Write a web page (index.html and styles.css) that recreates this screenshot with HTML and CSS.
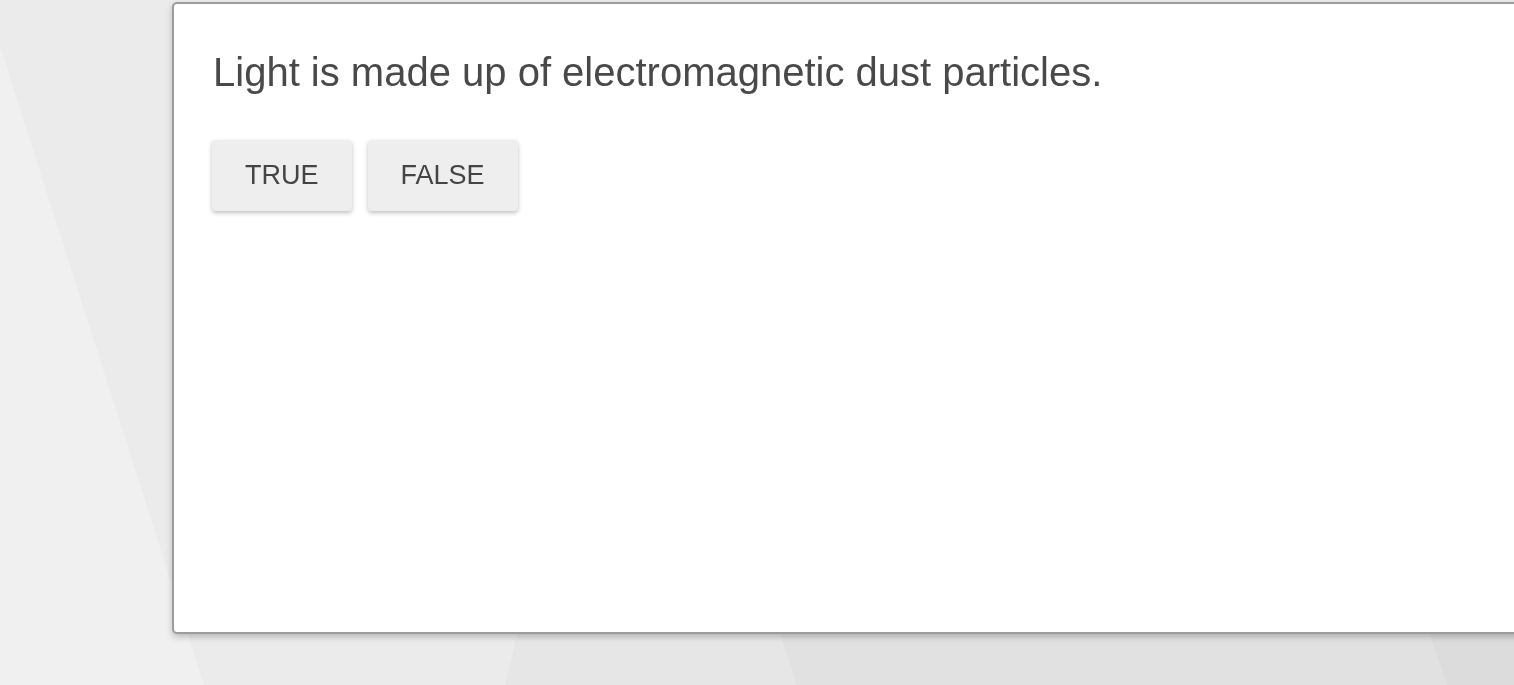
FILE: index.html
```html
<!DOCTYPE html>
<html lang="en">
<head>
<meta charset="utf-8">
<title>Quiz</title>
<link rel="stylesheet" href="styles.css">
</head>
<body>
<svg class="backdrop" viewBox="0 0 1514 685" preserveAspectRatio="none" aria-hidden="true">
  <rect x="0" y="0" width="1514" height="685" fill="#ebebeb"/>
  <polygon points="0,46 204,685 0,685" fill="#f0f0f0"/>
  <polygon points="523,610 771,610 797,685 505,685" fill="#e6e6e6"/>
  <polygon points="771,610 1421,610 1447,685 797,685" fill="#e1e1e1"/>
  <polygon points="1421,610 1514,610 1514,685 1447,685" fill="#dcdcdc"/>
</svg>
<main class="card">
  <p class="question">Light is made up of electromagnetic dust particles.</p>
  <div class="answers">
    <button class="answer" type="button">TRUE</button>
    <button class="answer" type="button">FALSE</button>
  </div>
</main>
</body>
</html>
```
FILE: styles.css
```css
html, body {
  margin: 0;
  padding: 0;
  height: 100%;
  overflow: hidden;
}

body {
  font-family: "Liberation Sans", Arial, sans-serif;
  position: relative;
  background: #ebebeb;
}

.backdrop {
  position: fixed;
  left: 0;
  top: 0;
  width: 100%;
  height: 100%;
  z-index: 0;
  display: block;
}

.card {
  position: relative;
  z-index: 1;
  box-sizing: border-box;
  margin: 2px 0 0 172px;
  width: 1420px;
  height: 632px;
  background: #ffffff;
  border: 2px solid #9c9c9c;
  border-radius: 5px;
  box-shadow: 0 3px 6px rgba(0, 0, 0, 0.22);
  padding: 44px 40px 0 38px;
}

.question {
  margin: 0;
  padding-left: 1px;
  font-size: 40px;
  line-height: 48px;
  color: #494949;
}

.answers {
  display: flex;
  gap: 16px;
  margin-top: 44px;
}

.answer {
  font-family: "Liberation Sans", Arial, sans-serif;
  font-size: 27px;
  height: 71px;
  padding: 0 33px;
  border: none;
  border-radius: 4px;
  background: #eeeeee;
  color: #444444;
  box-shadow: 0 2px 4px rgba(0, 0, 0, 0.25);
  cursor: pointer;
}
```
